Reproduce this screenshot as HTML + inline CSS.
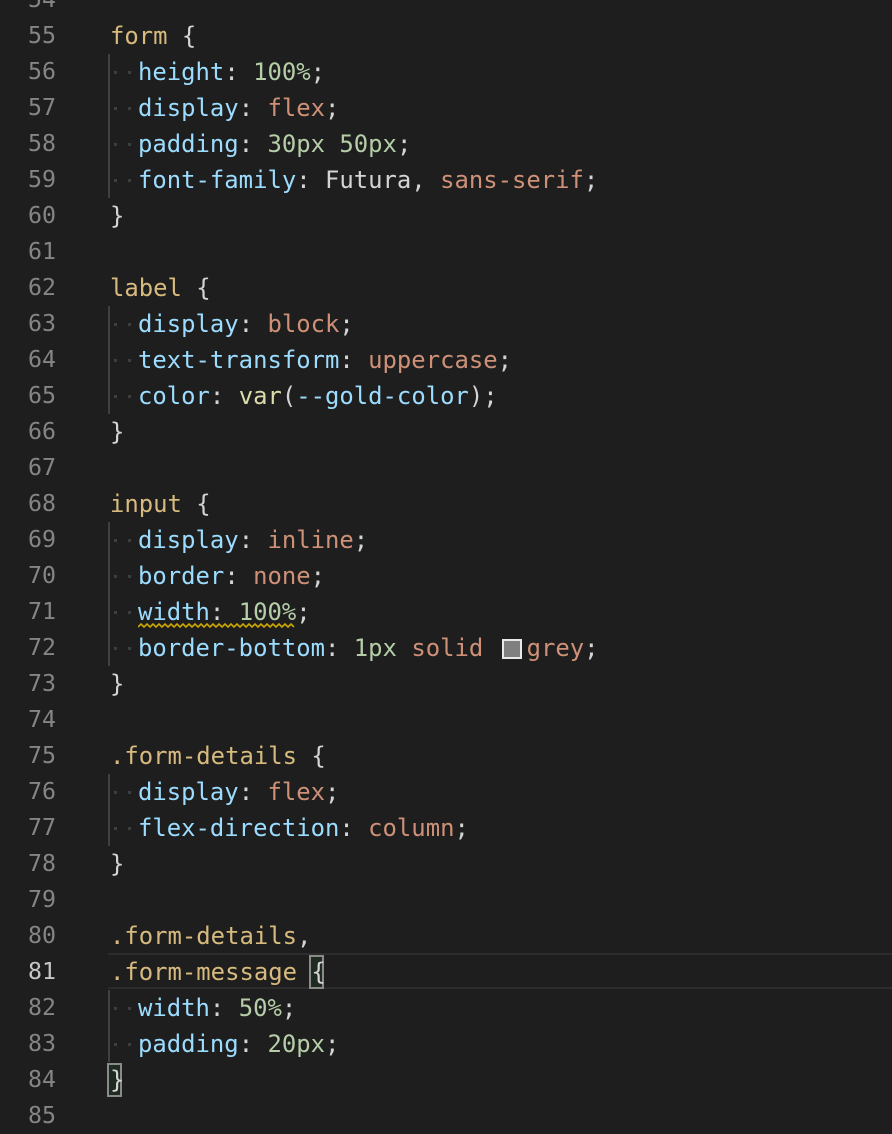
<!DOCTYPE html>
<html><head><style>
body{margin:0;width:892px;height:1132px;background:#1e1e1e;overflow:hidden;position:relative;font-family:"DejaVu Sans Mono","Liberation Mono",monospace;font-size:23.9px;}
.l{position:absolute;left:0;height:36px;line-height:36px;white-space:pre;width:892px}
.n{position:absolute;left:0;width:56px;text-align:right;color:#858585;font-size:23.25px}
.c{position:absolute;left:110px;color:#d4d4d4}
.i{position:absolute;left:138px;color:#d4d4d4}
.s{color:#d7ba7d}.p{color:#9cdcfe}.v{color:#ce9178}.m{color:#b5cea8}.w{color:#d4d4d4}
.g{position:absolute;left:108px;width:2px;background:#404040}
.d{position:absolute;width:3px;height:3px;background:#3e3e3e}
.bx{position:absolute;border:2px solid #8a8a8a;background:#1f2a20;box-sizing:border-box}
.sw{display:inline-block;width:29px;height:20px;position:relative;vertical-align:middle}
.sw i{position:absolute;left:4px;top:0;width:20px;height:20px;border:2px solid #e8e8e8;background:#808080;box-sizing:border-box}
</style></head><body>
<div style="position:absolute;left:108px;top:953px;width:784px;height:36px;border-top:2px solid #2c2c2c;border-bottom:2px solid #2c2c2c;box-sizing:border-box"></div>
<div class="bx" style="left:309px;top:955px;width:15px;height:34px"></div>
<div class="bx" style="left:107px;top:1063px;width:15px;height:34px"></div>

<div class="g" style="top:54px;height:144px"></div>
<div class="g" style="top:306px;height:108px"></div>
<div class="g" style="top:522px;height:144px"></div>
<div class="g" style="top:774px;height:72px"></div>
<div class="g" style="top:990px;height:72px"></div>

<div class="l" style="top:-18px"><span class="n">54</span></div>
<div class="l" style="top:18px"><span class="n">55</span><span class="c"><span class="s">form</span> {</span></div>
<div class="l" style="top:54px"><span class="n">56</span><span class="i"><span class="p">height</span>: <span class="m">100%</span>;</span></div>
<div class="l" style="top:90px"><span class="n">57</span><span class="i"><span class="p">display</span>: <span class="v">flex</span>;</span></div>
<div class="l" style="top:126px"><span class="n">58</span><span class="i"><span class="p">padding</span>: <span class="m">30px</span> <span class="m">50px</span>;</span></div>
<div class="l" style="top:162px"><span class="n">59</span><span class="i"><span class="p">font-family</span>: Futura, <span class="v">sans-serif</span>;</span></div>
<div class="l" style="top:198px"><span class="n">60</span><span class="c">}</span></div>
<div class="l" style="top:234px"><span class="n">61</span></div>
<div class="l" style="top:270px"><span class="n">62</span><span class="c"><span class="s">label</span> {</span></div>
<div class="l" style="top:306px"><span class="n">63</span><span class="i"><span class="p">display</span>: <span class="v">block</span>;</span></div>
<div class="l" style="top:342px"><span class="n">64</span><span class="i"><span class="p">text-transform</span>: <span class="v">uppercase</span>;</span></div>
<div class="l" style="top:378px"><span class="n">65</span><span class="i"><span class="p">color</span>: <span style="color:#dcdcaa">var</span>(<span class="p">--gold-color</span>);</span></div>
<div class="l" style="top:414px"><span class="n">66</span><span class="c">}</span></div>
<div class="l" style="top:450px"><span class="n">67</span></div>
<div class="l" style="top:486px"><span class="n">68</span><span class="c"><span class="s">input</span> {</span></div>
<div class="l" style="top:522px"><span class="n">69</span><span class="i"><span class="p">display</span>: <span class="v">inline</span>;</span></div>
<div class="l" style="top:558px"><span class="n">70</span><span class="i"><span class="p">border</span>: <span class="v">none</span>;</span></div>
<div class="l" style="top:594px"><span class="n">71</span><span class="i"><span class="p">width</span>: <span class="m">100%</span>;</span></div>
<div class="l" style="top:630px"><span class="n">72</span><span class="i"><span class="p">border-bottom</span>: <span class="m">1px</span> <span class="v">solid</span> <span class="sw"><i></i></span><span class="v">grey</span>;</span></div>
<div class="l" style="top:666px"><span class="n">73</span><span class="c">}</span></div>
<div class="l" style="top:702px"><span class="n">74</span></div>
<div class="l" style="top:738px"><span class="n">75</span><span class="c"><span class="s">.form-details</span> {</span></div>
<div class="l" style="top:774px"><span class="n">76</span><span class="i"><span class="p">display</span>: <span class="v">flex</span>;</span></div>
<div class="l" style="top:810px"><span class="n">77</span><span class="i"><span class="p">flex-direction</span>: <span class="v">column</span>;</span></div>
<div class="l" style="top:846px"><span class="n">78</span><span class="c">}</span></div>
<div class="l" style="top:882px"><span class="n">79</span></div>
<div class="l" style="top:918px"><span class="n">80</span><span class="c"><span class="s">.form-details</span>,</span></div>
<div class="l" style="top:954px"><span class="n" style="color:#c6c6c6">81</span><span class="c"><span class="s">.form-message</span> {</span></div>
<div class="l" style="top:990px"><span class="n">82</span><span class="i"><span class="p">width</span>: <span class="m">50%</span>;</span></div>
<div class="l" style="top:1026px"><span class="n">83</span><span class="i"><span class="p">padding</span>: <span class="m">20px</span>;</span></div>
<div class="l" style="top:1062px"><span class="n">84</span><span class="c">}</span></div>
<div class="l" style="top:1098px"><span class="n">85</span></div>

<svg style="position:absolute;left:138px;top:621px" width="158" height="9"><polyline fill="none" stroke="#cca700" stroke-width="1.6" points="0,6 3,3 6,6 9,3 12,6 15,3 18,6 21,3 24,6 27,3 30,6 33,3 36,6 39,3 42,6 45,3 48,6 51,3 54,6 57,3 60,6 63,3 66,6 69,3 72,6 75,3 78,6 81,3 84,6 87,3 90,6 93,3 96,6 99,3 102,6 105,3 108,6 111,3 114,6 117,3 120,6 123,3 126,6 129,3 132,6 135,3 138,6 141,3 144,6 147,3 150,6 153,3 156,6"/></svg>

<div id="dots"></div>
<script>
var ys=[56,57,58,59,63,64,65,69,70,71,72,76,77,82,83],h='';
ys.forEach(function(n){var y=18+(n-55)*36+17;h+='<div class="d" style="left:114px;top:'+y+'px"></div><div class="d" style="left:128px;top:'+y+'px"></div>';});
document.getElementById('dots').innerHTML=h;
</script>
</body></html>
